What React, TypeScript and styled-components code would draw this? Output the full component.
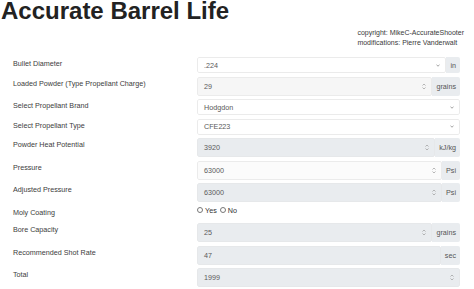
import React from "react";
import styled, { createGlobalStyle } from "styled-components";

const GlobalStyle = createGlobalStyle`
  body {
    margin: 0;
    background: #ffffff;
    font-family: "Liberation Sans", Arial, sans-serif;
  }
`;

const Page = styled.div`
  width: 474px;
  height: 289px;
  overflow: hidden;
  color: #333;
`;

const Title = styled.h1`
  margin: -1px 0 0 1px;
  font-size: 24px;
  line-height: 24px;
  font-weight: 700;
  color: #222;
`;

const Credits = styled.div`
  width: max-content;
  margin: 5px 10px 0 auto;
  font-size: 7px;
  line-height: 10px;
  color: #3a3a3a;
`;

const Form = styled.div`
  margin-top: 9px;
  padding: 0 14px 0 13px;
`;

const Row = styled.div`
  display: grid;
  grid-template-columns: 184px 1fr;
  margin-bottom: 3.5px;
`;

const Label = styled.div<{ $lh?: number }>`
  font-size: 7.2px;
  line-height: ${({ $lh }) => $lh ?? 14}px;
  color: #3c3c3c;
`;

const Group = styled.div<{ $h: number }>`
  display: flex;
  height: ${({ $h }) => $h}px;
  border-radius: 2px;
  overflow: hidden;
`;

const Box = styled.div<{ $bg: string }>`
  flex: 1;
  display: flex;
  align-items: center;
  justify-content: space-between;
  background: ${({ $bg }) => $bg};
  border: 1px solid ${({ $bg }) => ($bg === "#e9ecef" ? "#e6e8ea" : "#ebebeb")};
  border-radius: 2px;
  padding: 0 5px 0 6px;
  font-size: 7.2px;
  color: #5a5a5a;
`;

const Addon = styled.div`
  display: flex;
  align-items: center;
  padding: 0 4px;
  background: #e9ecef;
  font-size: 7.2px;
  color: #555;
`;

const Radios = styled.div`
  display: flex;
  align-items: flex-start;
  height: 14px;
  gap: 3px;
  font-size: 7.2px;
  line-height: 9px;
  color: #333;
`;

const Radio = styled.span`
  display: inline-flex;
  align-items: center;
  gap: 2px;
  &::before {
    content: "";
    width: 4px;
    height: 4px;
    border: 0.8px solid #777;
    border-radius: 50%;
  }
`;

const Spinner = () => (
  <svg width="4" height="7" viewBox="0 0 4 7">
    <path d="M0.5 2.5 L2 1 L3.5 2.5 M0.5 4.5 L2 6 L3.5 4.5" fill="none" stroke="#999" strokeWidth="0.7" />
  </svg>
);

const Chevron = () => (
  <svg width="4" height="3" viewBox="0 0 4 3">
    <path d="M0.5 0.8 L2 2.2 L3.5 0.8" fill="none" stroke="#777" strokeWidth="0.7" />
  </svg>
);

type Field = {
  label: string;
  value: string;
  kind: "select" | "number" | "text";
  bg: string;
  unit?: string;
  h: number;
};

const WHITE = "#ffffff";
const GRAY = "#e9ecef";

const fields: Field[] = [
  { label: "Bullet Diameter", value: ".224", kind: "select", bg: WHITE, unit: "in", h: 16 },
  { label: "Loaded Powder (Type Propellant Charge)", value: "29", kind: "number", bg: "#f6f6f6", unit: "grains", h: 19 },
  { label: "Select Propellant Brand", value: "Hodgdon", kind: "select", bg: WHITE, h: 16 },
  { label: "Select Propellant Type", value: "CFE223", kind: "select", bg: WHITE, h: 16 },
  { label: "Powder Heat Potential", value: "3920", kind: "number", bg: GRAY, unit: "kJ/kg", h: 19 },
  { label: "Pressure", value: "63000", kind: "number", bg: "#fbfbfb", unit: "Psi", h: 19 },
  { label: "Adjusted Pressure", value: "63000", kind: "number", bg: GRAY, unit: "Psi", h: 19 },
];

const after: Field[] = [
  { label: "Bore Capacity", value: "25", kind: "number", bg: GRAY, unit: "grains", h: 19 },
  { label: "Recommended Shot Rate", value: "47", kind: "text", bg: GRAY, unit: "sec", h: 19 },
  { label: "Total", value: "1999", kind: "number", bg: GRAY, h: 19 },
];

const FieldRow: React.FC<{ f: Field }> = ({ f }) => (
  <Row>
    <Label>{f.label}</Label>
    <Group $h={f.h}>
      <Box $bg={f.bg}>
        <span>{f.value}</span>
        {f.kind === "select" && <Chevron />}
        {f.kind === "number" && <Spinner />}
      </Box>
      {f.unit && <Addon>{f.unit}</Addon>}
    </Group>
  </Row>
);

const App: React.FC = () => {
  return (
    <Page>
      <GlobalStyle />
      <Title>Accurate Barrel Life</Title>
      <Credits>
        copyright: MikeC-AccurateShooter
        <br />
        modifications: Pierre Vanderwalt
      </Credits>
      <Form>
        {fields.map(f => (
          <FieldRow key={f.label} f={f} />
        ))}
        <Row>
          <Label $lh={13}>Moly Coating</Label>
          <Radios>
            <Radio>Yes</Radio>
            <Radio>No</Radio>
          </Radios>
        </Row>
        {after.map(f => (
          <FieldRow key={f.label} f={f} />
        ))}
      </Form>
    </Page>
  );
};

export default App;
